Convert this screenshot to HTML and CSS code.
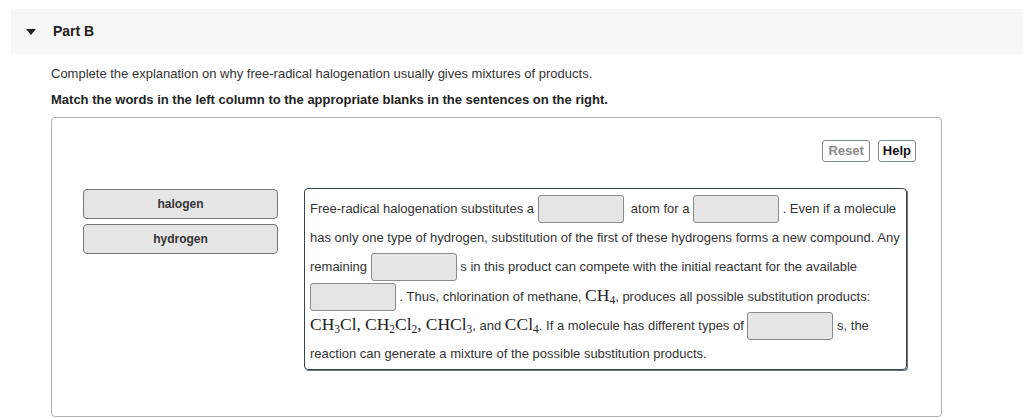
FILE: index.html
```html
<!DOCTYPE html>
<html>
<head>
<meta charset="utf-8">
<link rel="stylesheet" href="styles.css">
</head>
<body>
<div class="header">
  <span class="caret"></span>
  <span class="part">Part B</span>
</div>
<div class="content">
  <p class="intro">Complete the explanation on why free-radical halogenation usually gives mixtures of products.</p>
  <p class="instr">Match the words in the left column to the appropriate blanks in the sentences on the right.</p>
  <div class="panel">
    <div class="tools">
      <button class="btn reset">Reset</button>
      <button class="btn help">Help</button>
    </div>
    <div class="work">
      <div class="tiles">
        <div class="tile">halogen</div>
        <div class="tile">hydrogen</div>
      </div>
      <div class="sentences">
        <div class="line">Free-radical halogenation substitutes a <span class="blank"></span> &nbsp;atom for a <span class="blank"></span> . Even if a molecule</div>
        <div class="line">has only one type of hydrogen, substitution of the first of these hydrogens forms a new compound. Any</div>
        <div class="line">remaining <span class="blank"></span> s in this product can compete with the initial reactant for the available</div>
        <div class="line"><span class="blank"></span> . Thus, chlorination of methane, <span class="m">CH<sub>4</sub></span>, produces all possible substitution products:</div>
        <div class="line"><span class="m">CH<sub>3</sub>Cl<span class="punct">,</span>CH<sub>2</sub>Cl<sub>2</sub><span class="punct">,</span>CHCl<sub>3</sub></span>, and <span class="m">CCl<sub>4</sub></span>. If a molecule has different types of <span class="blank"></span> s, the</div>
        <div class="line">reaction can generate a mixture of the possible substitution products.</div>
      </div>
    </div>
  </div>
</div>
</body>
</html>
```

FILE: styles.css
```css
html, body {
  margin: 0;
  padding: 0;
  background: #ffffff;
  font-family: "Liberation Sans", Arial, sans-serif;
  color: #333333;
}
.header {
  margin: 9px 0 0 11px;
  height: 45px;
  background: #f7f7f7;
  display: flex;
  align-items: center;
}
.caret {
  width: 0;
  height: 0;
  margin-left: 15px;
  border-left: 5px solid transparent;
  border-right: 5px solid transparent;
  border-top: 6px solid #222222;
}
.part {
  margin-left: 17px;
  font-size: 14px;
  font-weight: bold;
  color: #222222;
  margin-top: -1px;
}
.content {
  margin-left: 51px;
  width: 891px;
}
.intro {
  margin: 12px 0 0 0;
  font-size: 13px;
  line-height: 16px;
}
.instr {
  margin: 10px 0 0 0;
  font-size: 13px;
  line-height: 16px;
  font-weight: bold;
  color: #222222;
}
.panel {
  margin-top: 9px;
  border: 1px solid #b0b0b0;
  border-radius: 4px;
  box-sizing: border-box;
  height: 300px;
}
.tools {
  display: flex;
  justify-content: flex-end;
  gap: 8px;
  padding: 22px 25px 0 0;
}
.btn {
  font-family: "Liberation Sans", Arial, sans-serif;
  font-size: 13px;
  font-weight: bold;
  background: #ffffff;
  border: 1px solid #7f8b91;
  border-radius: 3px;
  height: 22px;
  padding: 0 5px;
  line-height: 20px;
}
.reset { color: #8a8a8a; }
.help { color: #111111; padding: 0 4px; }
.work {
  display: flex;
  margin: 26px 0 0 31px;
  gap: 26px;
  align-items: flex-start;
}
.tiles {
  display: flex;
  flex-direction: column;
  gap: 5px;
  margin-top: 1px;
}
.tile {
  width: 193px;
  height: 28px;
  line-height: 28px;
  text-align: center;
  background: #e5e5e5;
  border: 1px solid #777777;
  border-radius: 4px;
  font-size: 12px;
  font-weight: bold;
  color: #333333;
}
.sentences {
  border: 1px solid #38444c;
  border-radius: 4px;
  box-shadow: 1px 1px 0 #6b7378;
  padding: 5px 0 1px 5px;
  box-sizing: border-box;
  width: 603px;
}
.line {
  font-size: 13px;
  height: 29px;
  line-height: 29px;
  white-space: nowrap;
  color: #333333;
}
.blank {
  display: inline-block;
  width: 84px;
  height: 26px;
  background: #e5e5e5;
  border: 1px solid #888c90;
  border-radius: 3px;
  vertical-align: middle;
  margin: -2px 0 0 0;
}
.m {
  font-family: "Liberation Serif", "DejaVu Serif", serif;
  font-size: 17.5px;
  color: #222222;
}
.m sub {
  font-size: 11.5px;
  vertical-align: -3px;
  line-height: 0;
}
.punct {
  margin-right: 4px;
}
```
